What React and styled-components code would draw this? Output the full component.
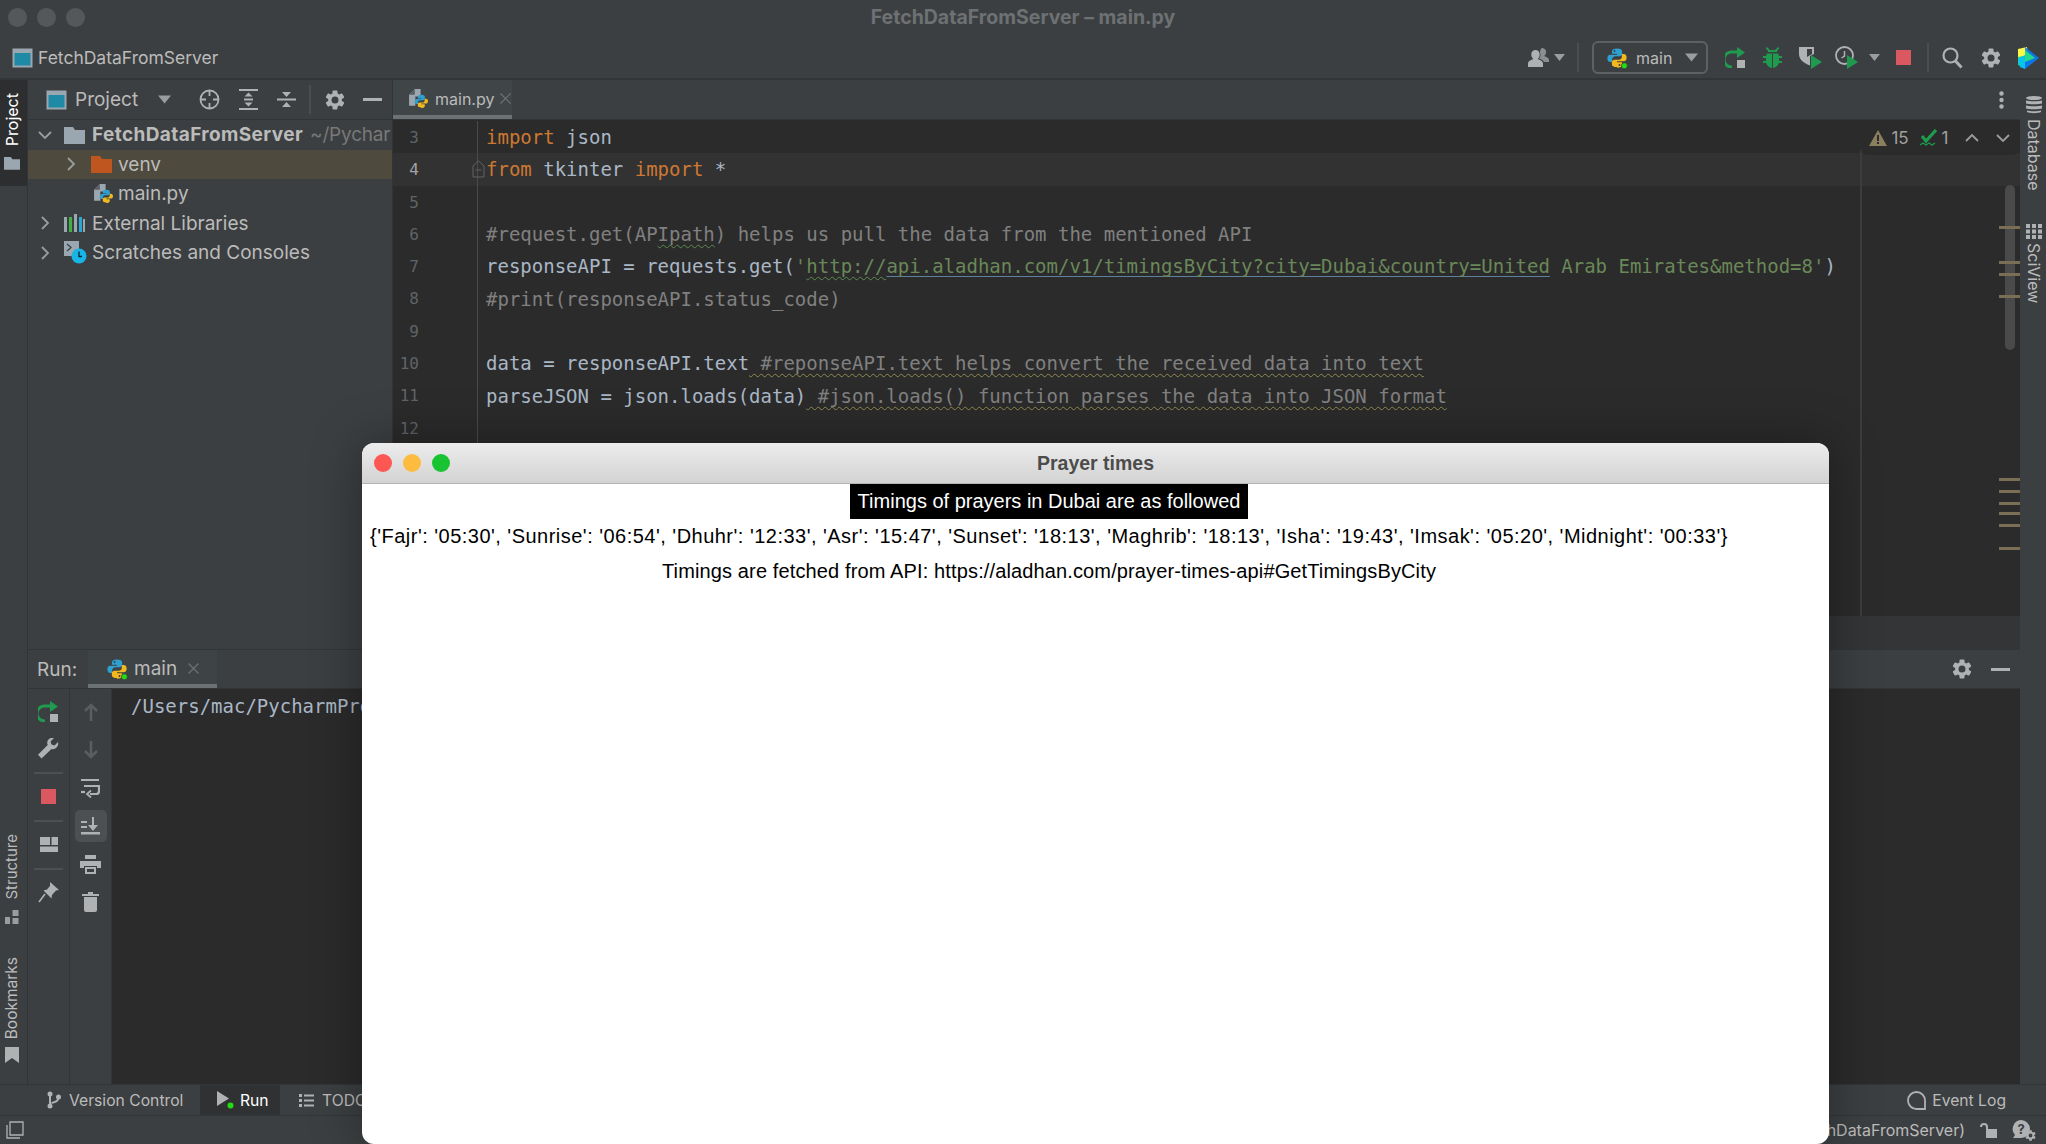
import React from "react";
import styled, { createGlobalStyle } from "styled-components";

const Global = createGlobalStyle`
  html, body { margin: 0; padding: 0; background: #3c3f41; }
  * { box-sizing: border-box; }
  svg { flex: none; }
`;

const UI = `Inter, "Liberation Sans", sans-serif`;
const MONO = `"DejaVu Sans Mono", "Liberation Mono", monospace`;

const Screen = styled.div`
  position: relative; width: 2046px; height: 1144px; overflow: hidden;
  display: flex; flex-direction: column; background: #3c3f41;
  font-family: ${UI}; color: #bbbbbb;
`;
const TitleBar = styled.div`
  height: 37px; flex: none; display: flex; align-items: center; position: relative; padding: 0 0 3px 8px; gap: 10px;
`;
const GreyDot = styled.span`width: 19px; height: 19px; border-radius: 50%; background: #55585a;`;
const TitleText = styled.div`
  position: absolute; left: 0; right: 0; top: 5px; text-align: center; font-size: 19.5px; line-height: 24px; font-weight: 700; color: #6e7173;
`;
const NavBar = styled.div`
  height: 43px; flex: none; display: flex; align-items: center; padding: 0 7px 0 12px; border-bottom: 2px solid #323537;
`;
const NavName = styled.span`font-size: 17.5px; margin-left: 5px; color: #bbbbbb;`;
const NavTools = styled.div`margin-left: auto; display: flex; align-items: center;`;
const Slot = styled.span`
  display: flex; align-items: center; justify-content: center; flex: none;
  width: ${p => p.$w}px; margin-left: ${p => p.$ml || 0}px;
`;
const Sep = styled.span`width: 2px; height: 29px; background: #4b4e50; margin-left: ${p => p.$ml}px; flex: none;`;
const ConfigButton = styled.div`
  width: 116px; height: 33px; margin-left: 13px; border: 2px solid #5e6163; border-radius: 6px; flex: none;
  display: flex; align-items: center; padding-left: 12px; gap: 8px; font-size: 16px; color: #bbbbbb;
`;
const Body = styled.div`flex: 1; min-height: 0; display: flex;`;
const LeftStripe = styled.div`
  width: 28px; flex: none; border-right: 1px solid #323537; display: flex; flex-direction: column;
`;
const StripeTab = styled.div`
  display: flex; flex-direction: column; align-items: center; gap: ${p => p.$gap || 8}px; width: 27px;
  padding: ${p => p.$pad}; background: ${p => p.$active ? "#2c2e2f" : "transparent"};
  margin-top: ${p => p.$top || 0}px;
`;
const VerticalUp = styled.span`
  writing-mode: vertical-rl; transform: rotate(180deg); font-size: ${p => p.$size || 16}px; line-height: 20px;
  color: ${p => p.$active ? "#ffffff" : "#bbbbbb"};
`;
const VerticalDown = styled.span`writing-mode: vertical-rl; font-size: 16px; line-height: 20px; color: #bbbbbb;`;
const RightStripe = styled.div`
  width: 26px; flex: none; display: flex; flex-direction: column; align-items: center; padding: 16px 0 0 2px; background: #3c3f41;
`;
const RightTab = styled.div`display: flex; flex-direction: column; align-items: center; gap: ${p => p.$gap || 5}px; margin-bottom: ${p => p.$mb || 0}px;`;
const Center = styled.div`flex: 1; min-width: 0; display: flex; flex-direction: column;`;
const Upper = styled.div`height: 569px; flex: none; display: flex;`;
const ProjectPanel = styled.div`width: 365px; flex: none; display: flex; flex-direction: column; border-right: 1px solid #323537;`;
const PanelHead = styled.div`
  height: 40px; flex: none; display: flex; align-items: center; padding-left: 18px; border-bottom: 1px solid #323537;
`;
const PanelTitle = styled.span`font-size: 19px; margin-left: 8px; width: 64px; color: #bbbbbb;`;
const Tree = styled.div`display: flex; flex-direction: column;`;
const Row = styled.div`
  height: 29.5px; display: flex; align-items: center; font-size: 19px; white-space: nowrap; overflow: hidden;
  padding-left: ${p => p.$indent}px; background: ${p => p.$selected ? "#4f4a3e" : "transparent"};
`;
const Chevron = styled.span`width: ${p => p.$w}px; flex: none; display: flex; align-items: center;`;
const RowLabel = styled.span`
  margin-left: ${p => p.$ml ?? 7}px; font-weight: ${p => p.$bold ? 700 : 400}; color: #bbbbbb; letter-spacing: ${p => p.$bold ? "0.4px" : "0"};
`;
const RowHint = styled.span`margin-left: 7px; color: #787878; letter-spacing: -0.2px;`;
const EditorPane = styled.div`flex: 1; min-width: 0; display: flex; flex-direction: column;`;
const TabBar = styled.div`height: 40px; flex: none; display: flex; align-items: stretch; justify-content: space-between; border-bottom: 1px solid #323537;`;
const FileTab = styled.div`
  width: 119px; display: flex; align-items: center; padding: 2px 0 0 15px; gap: 6px; font-size: 16px; color: #bbbbbb;
  background: #404548; border-bottom: 4px solid #6c7174;
`;
const Kebab = styled.div`width: 66px; padding-right: 16px; display: flex; align-items: center; justify-content: flex-end;`;
const EditorBody = styled.div`position: relative; flex: 1; min-height: 0; background: #2b2b2b; overflow: hidden; padding-top: 1px;`;
const CodeLine = styled.div`
  position: relative; height: 32.3px; display: flex; align-items: center;
  background: ${p => p.$current ? "#323232" : "transparent"};
  font-family: ${MONO}; font-size: 19px; white-space: pre; color: #a9b7c6;
`;
const LineNo = styled.span`
  width: 85px; flex: none; padding-right: 58px; text-align: right; font-size: 16px;
  color: ${p => p.$current ? "#a4a3a3" : "#606366"}; border-right: 1px solid #4a4a4a; align-self: stretch; line-height: 34px;
`;
const Code = styled.span`padding-left: 8px;`;
const Keyword = styled.span`color: #cc7832;`;
const Comment = styled.span`color: #808080;`;
const Str = styled.span`color: #6a8759;`;
const Wavy = styled.span`
  text-decoration: underline wavy ${p => p.$c || "#8f8b4e"} 1px; text-decoration-skip-ink: none; text-underline-offset: 3px;
`;
const Link = styled.span`text-decoration: underline solid #5f7f9e 1px; text-decoration-skip-ink: none; text-underline-offset: 3px;`;
const FoldMark = styled.svg`position: absolute; left: 79px; top: 7px;`;
const MarginLine = styled.div`position: absolute; left: 1467px; top: 0; bottom: 0; width: 2px; background: #3c3c3c;`;
const Inspection = styled.div`
  position: absolute; left: 1467px; top: 0; width: 160px; height: 35px; background: #2b2b2b; border-radius: 0 0 8px 8px;
  display: flex; align-items: center; padding-left: 9px; font-size: 17px; color: #a0a0a0;
`;
const Scroll = styled.div`position: absolute; left: 1612px; top: 65px; width: 10px; height: 165px; border-radius: 5px; background: #4a4a4a;`;
const Mark = styled.div`position: absolute; left: 1606px; width: 21px; height: 3px; background: #7a6f55; top: ${p => p.$y}px;`;
const CrumbBar = styled.div`height: 33px; flex: none; background: #333536;`;
const RunPanel = styled.div`flex: 1; min-height: 0; display: flex; flex-direction: column; border-top: 1px solid #323537;`;
const RunHead = styled.div`height: 39px; flex: none; display: flex; align-items: stretch; border-bottom: 1px solid #323537; padding-left: 9px;`;
const RunLabel = styled.span`width: 51px; font-size: 19px; align-self: center; color: #bbbbbb;`;
const RunTab = styled.div`
  width: 129px; display: flex; align-items: center; padding: 3px 0 0 18px; gap: 6px; font-size: 19px; color: #bbbbbb;
  border-bottom: 4px solid #6c7174; background: #3e4346;
`;
const RunTools = styled.div`margin-left: auto; display: flex; align-items: center; gap: 19px; padding-right: 10px;`;
const RunBody = styled.div`flex: 1; min-height: 0; display: flex;`;
const ToolCol = styled.div`
  width: ${p => p.$w}px; flex: none; display: flex; flex-direction: column; align-items: center; border-right: 1px solid #323537; padding-top: 4px;
`;
const ToolBtn = styled.div`
  width: 32px; height: ${p => p.$h || 38}px; display: flex; align-items: center; justify-content: center; border-radius: 5px; flex: none;
  background: ${p => p.$on ? "#4c5052" : "transparent"}; margin: ${p => p.$on ? "3px 0" : "0"};
`;
const ToolDiv = styled.div`width: 29px; height: 2px; background: #4d5052; margin: 4.5px 0; flex: none;`;
const Console = styled.div`
  flex: 1; background: #2b2b2b; font-family: ${MONO}; font-size: 19px; color: #a9b7c6; padding: 6px 19px; white-space: pre;
`;
const ToolTabs = styled.div`
  height: 31px; flex: none; display: flex; align-items: stretch; font-size: 15.7px; border-top: 1px solid #323537; padding-left: 47px; position: relative;
`;
const BottomTab = styled.div`
  display: flex; align-items: center; gap: ${p => p.$gap || 8}px; width: ${p => p.$w}px; padding-left: ${p => p.$pl || 0}px;
  background: ${p => p.$active ? "#2f3132" : "transparent"}; color: ${p => p.$active ? "#ffffff" : "#bbbbbb"};
`;
const EventLog = styled.div`margin-left: auto; margin-right: 40px; display: flex; align-items: center; gap: 6px; color: #bbbbbb;`;
const StatusBar = styled.div`
  height: 29px; flex: none; display: flex; align-items: center; padding: 0 10px 0 6px; border-top: 1px solid #323537; font-size: 16px;
`;
const StatusRight = styled.div`margin-left: auto; display: flex; align-items: center; gap: 15px; color: #bbbbbb;`;

const PrayerWindow = styled.div`
  position: absolute; left: 362px; top: 443px; width: 1467px; height: 701px; background: #ffffff;
  border-radius: 12px; overflow: hidden; box-shadow: 0 0 50px rgba(0,0,0,0.35);
  display: flex; flex-direction: column; font-family: "Liberation Sans", Arial, sans-serif; color: #000;
`;
const WinTitle = styled.div`
  height: 41px; flex: none; position: relative; display: flex; align-items: center; padding-left: 6px; gap: 11px;
  background: linear-gradient(#ececec, #d3d3d3); border-bottom: 1px solid #b4b4b4;
`;
const Light = styled.span`width: 18px; height: 18px; border-radius: 50%; background: ${p => p.$c}; margin-left: ${p => p.$ml || 0}px;`;
const WinName = styled.span`position: absolute; left: 0; right: 0; text-align: center; font-size: 19.5px; font-weight: 700; color: #4c4c4c;`;
const WinContent = styled.div`width: 1374px; display: flex; flex-direction: column; align-items: center;`;
const BlackLabel = styled.div`height: 35px; background: #000; color: #fff; display: flex; align-items: center; padding: 0 8px; font-size: 20px;`;
const PlainLabel = styled.div`height: 35px; display: flex; align-items: center; font-size: 20px; white-space: pre; letter-spacing: ${p => p.$track}px;`;

const Snake = () => (
  <>
    <path fill="#2f9fd0" d="M12 1.500c-3.600 0-5.500 1.100-5.500 3.200V7.400H12v1H4.600C2.600 8.400 1.500 10 1.500 12.200c0 2.400 1.100 4.100 3.100 4.100h2.100v-2.800c0-1.900 1.600-3.400 3.400-3.400h4.800c1.500 0 2.700-1.200 2.700-2.700V4.700c0-1.900-1.900-3.200-5.600-3.200z" />
    <path fill="#f2b91f" d="M12 22.500c3.600 0 5.500-1.100 5.500-3.200V16.600H12v-1h7.400c2 0 3.100-1.600 3.100-3.800 0-2.400-1.100-4.100-3.100-4.100h-2.100v2.800c0 1.900-1.600 3.400-3.400 3.400h-4.800c-1.500 0-2.700 1.200-2.700 2.700v2.100c0 1.900 1.900 3.200 5.600 3.200z" />
  </>
);
const Py = ({ size = 24, dot }) => (
  <svg width={size} height={size} viewBox="0 0 24 24">
    <Snake />
    <circle cx="9.300" cy="4.400" r="1" fill="#3c3f41" />
    <circle cx="14.700" cy="19.600" r="1" fill="#3c3f41" />
    {dot && <circle cx="20" cy="20.500" r="3.300" fill="#22dd11" stroke="#3c3f41" strokeWidth="0.800" />}
  </svg>
);
const PyFile = ({ size = 21 }) => (
  <svg width={size} height={size} viewBox="0 0 20 20">
    <path fill="#9aa7b0" d="M1 6.500L6.500 1H12v7H7v9H1z" />
    <path fill="#5a5f62" d="M6.500 1v5.500H1z" />
    <g transform="translate(5.500 5.500) scale(.6)"><Snake /></g>
  </svg>
);
const ModuleIcon = () => (
  <svg width="21" height="20" viewBox="0 0 21 20">
    <rect x="0.500" y="0.500" width="20" height="19" fill="#9aa7b0" />
    <rect x="2.500" y="5" width="16" height="12.500" fill="#1f8aa6" />
  </svg>
);
const Folder = ({ c = "#9aa7b0", w = 21 }) => (
  <svg width={w} height="18" viewBox="0 0 21 18"><path fill={c} d="M0 1h9l2 3h10v14H0z" /></svg>
);
const Caret = ({ w = 13, c = "#9a9da0" }) => (
  <svg width={w} height="9" viewBox="0 0 13 9"><path fill={c} d="M0 0.500h13L6.500 8.500z" /></svg>
);
const Chev = ({ dir = "right", size = 14, c = "#9a9da0" }) => {
  const d = { right: "M4 1l6 6-6 6", down: "M1 4l6 6 6-6", up: "M1 10l6-6 6 6" }[dir];
  return <svg width={size} height={size} viewBox="0 0 14 14"><path d={d} fill="none" stroke={c} strokeWidth="1.800" /></svg>;
};
const Gear = ({ size = 20, c = "#afb1b3" }) => (
  <svg width={size} height={size} viewBox="0 0 20 20">
    <g fill={c}>
      {[0, 60, 120, 180, 240, 300].map(a => <rect key={a} x="7.500" y="0.500" width="5" height="5" rx="1" transform={`rotate(${a} 10 10)`} />)}
    </g>
    <circle cx="10" cy="10" r="5.200" fill="none" stroke={c} strokeWidth="3.400" />
  </svg>
);
const Target = () => (
  <svg width="21" height="21" viewBox="0 0 21 21" fill="none" stroke="#afb1b3" strokeWidth="1.800">
    <circle cx="10.500" cy="10.500" r="9" />
    <path d="M10.500 1v6M10.500 14v6M1 10.500h6M14 10.500h6" />
  </svg>
);
const ExpandAll = () => (
  <svg width="19" height="21" viewBox="0 0 19 21" fill="#afb1b3">
    <rect y="0" width="19" height="2" /><rect y="19" width="19" height="2" /><rect y="9.500" width="9" height="2" x="5" />
    <path d="M9.500 3.500l4 4h-8zM9.500 17.500l-4-4h8z" />
  </svg>
);
const CollapseAll = () => (
  <svg width="19" height="21" viewBox="0 0 19 21" fill="#afb1b3">
    <rect y="9.500" width="19" height="2" />
    <path d="M9.500 8l-4.500-5h9zM9.500 13l4.500 5H5z" />
  </svg>
);
const Minus = ({ w = 19 }) => <svg width={w} height="3" viewBox="0 0 19 3"><rect width="19" height="3" fill="#afb1b3" /></svg>;
const Close = ({ size = 11, c = "#6e7173" }) => (
  <svg width={size} height={size} viewBox="0 0 11 11"><path d="M0.500 0.500l10 10M10.500 0.500l-10 10" stroke={c} strokeWidth="1.200" /></svg>
);
const ExtLib = () => (
  <svg width="21" height="18" viewBox="0 0 21 18">
    <rect x="0" y="3" width="3" height="15" fill="#9aa7b0" />
    <rect x="5" y="3" width="3" height="15" fill="#3fb33f" />
    <rect x="10" y="0" width="3" height="18" fill="#9aa7b0" />
    <rect x="15" y="3" width="3" height="15" fill="#2aa7d4" />
    <rect x="19" y="5" width="2" height="13" fill="#9aa7b0" />
  </svg>
);
const Scratches = () => (
  <svg width="23" height="23" viewBox="0 0 23 23">
    <path fill="#9aa7b0" d="M0 0h15v8a8 8 0 0 0-7 7H0z" />
    <path d="M3 3l4 3.500-4 3.500" fill="none" stroke="#3c3f41" strokeWidth="1.300" />
    <circle cx="15" cy="15" r="7.500" fill="#16b5e6" />
    <path d="M15 10.500V15.500h3" fill="none" stroke="#123" strokeWidth="1.300" />
  </svg>
);
const Rerun = ({ size = 21 }) => (
  <svg width={size} height={size} viewBox="0 0 21 21">
    <path d="M7 20a7.500 7.500 0 0 1-1-15h7" fill="none" stroke="#1f9a4f" strokeWidth="3" />
    <path d="M12 0l8 5.500-8 5.500z" fill="#1f9a4f" />
    <rect x="12" y="13" width="8" height="8" fill="#afb1b3" />
  </svg>
);
const Bug = () => (
  <svg width="19" height="21" viewBox="0 0 19 21" fill="#1f9a4f">
    <path d="M4 0l3 3h5l3-3 1.300 1.300L14 4v1H5V4L2.700 1.300z" />
    <path d="M4 6.500h11a6 6 0 0 1 1 3v5a6.500 6.500 0 0 1-13 0v-5a6 6 0 0 1 1-3z" />
    <path d="M0 9h19v2H0zM0 14h19v2H0z" />
    <path d="M9 7h1v14H9z" fill="#3c3f41" />
  </svg>
);
const Coverage = () => (
  <svg width="23" height="23" viewBox="0 0 23 23">
    <path fill="#afb1b3" d="M0 1h15v7l-4 2v9.500C4 17 0 13 0 8z" />
    <path fill="#3c3f41" d="M8 3h5v5l-5 3z" />
    <path fill="#1f9a4f" d="M12 9l11 7-11 7z" />
  </svg>
);
const Profile = () => (
  <svg width="23" height="23" viewBox="0 0 23 23">
    <circle cx="9.500" cy="9.500" r="8.500" fill="none" stroke="#afb1b3" strokeWidth="1.800" />
    <path d="M9.500 5v5l-3 2" fill="none" stroke="#afb1b3" strokeWidth="1.500" />
    <path fill="#1f9a4f" d="M12 9l11 7-11 7z" />
  </svg>
);
const Stop = ({ size = 15 }) => <svg width={size} height={size}><rect width={size} height={size} fill="#db5860" /></svg>;
const Search = () => (
  <svg width="21" height="22" viewBox="0 0 21 22" fill="none" stroke="#afb1b3">
    <circle cx="8.500" cy="8.500" r="7" strokeWidth="2.200" /><path d="M13.500 14l6 6.500" strokeWidth="3" />
  </svg>
);
const Logo = () => (
  <svg width="21" height="22" viewBox="0 0 21 22">
    <path fill="#21d789" d="M0 2l7 0 0 18-7-2z" />
    <path fill="#fcf84a" d="M0 2l9-2 1 8-10 2z" />
    <path fill="#07c3f2" d="M0 12l7-4 0 14-5-2z" />
    <path fill="#087cfa" d="M7 0l14 11-14 11z" opacity="0.900" />
    <path fill="#21d789" d="M7 3l10 8-10 4z" />
  </svg>
);
const User = () => (
  <svg width="21" height="19" viewBox="0 0 21 19" fill="#afb1b3">
    <path d="M14 0a4 4 0 0 1 4 5c-.3 1.500-1 2.500-2 3 2 1 5 1.500 5 4v2h-5c-1-2-3-3-5-3.500 1.500-1.500 2-3.500 1-6 0-2 1-4.500 2-4.500z" opacity="0.700" />
    <path d="M7.500 2a4.200 4.200 0 0 1 4.200 4.500c0 2-1 3.500-2 4.500 2.500 1 5.300 2 5.300 4.500V19H0v-3.500C0 13 3 12 5.300 11c-1-1-2-2.500-2-4.500A4.200 4.200 0 0 1 7.500 2z" />
  </svg>
);
const Warn = () => (
  <svg width="18" height="16" viewBox="0 0 18 16"><path fill="#8b7f5e" d="M9 0l9 16H0z" /><rect x="8" y="5" width="2" height="6" fill="#2b2b2b" /><rect x="8" y="12" width="2" height="2" fill="#2b2b2b" /></svg>
);
const Check = () => (
  <svg width="18" height="18" viewBox="0 0 18 18" fill="none" stroke="#1f9a4f">
    <path d="M2 7l4 5 10-11" strokeWidth="3.200" /><path d="M0 16l3-2 3 2 3-2 3 2 3-2" strokeWidth="1.300" />
  </svg>
);
const Dots = () => (
  <svg width="5" height="18" viewBox="0 0 5 18" fill="#afb1b3"><circle cx="2.500" cy="2.500" r="2.200" /><circle cx="2.500" cy="9" r="2.200" /><circle cx="2.500" cy="15.500" r="2.200" /></svg>
);
const Db = () => (
  <svg width="16" height="18" viewBox="0 0 16 18" fill="#afb1b3"><ellipse cx="8" cy="2" rx="8" ry="2" /><path d="M0 4.500c2 1 14 1 16 0v3c-2 1-14 1-16 0zM0 9.500c2 1 14 1 16 0v3c-2 1-14 1-16 0zM1 14.500c3 1 11 1 14 0v1.500c-2 1.500-12 1.500-14 0z" /></svg>
);
const Grid4 = () => (
  <svg width="16" height="15" viewBox="0 0 16 15" fill="#afb1b3">
    {[0, 5.500, 11].flatMap(y => [0, 6, 12].map(x => <rect key={`${x}-${y}`} x={x} y={y} width="4" height="4" />))}
  </svg>
);
const Tree2 = () => (
  <svg width="14" height="14" viewBox="0 0 14 14" fill="#9a9da0"><rect x="7.500" y="0" width="6" height="6" /><rect x="0" y="7" width="5" height="7" /><rect x="7.500" y="8" width="6" height="6" /></svg>
);
const Bookmark = () => <svg width="14" height="16" viewBox="0 0 14 16"><path fill="#afb1b3" d="M0 0h14v16l-7-5-7 5z" /></svg>;
const Wrench = () => (
  <svg width="21" height="21" viewBox="0 0 21 21"><path fill="#afb1b3" d="M20 4l-3.500 3.500-3-1L12.500 3.500 16 0c-3-.8-6.500 1-6.800 4.500 0 1 .1 1.800.5 2.500L0 16.800 3.500 20.500l10-9.500c3.500 1 7.700-2.500 6.500-7z" /></svg>
);
const Arrow = ({ up }) => (
  <svg width="14" height="18" viewBox="0 0 14 18" style={up ? undefined : { transform: "scaleY(-1)" }}><path d="M7 18V2M1 8l6-6 6 6" fill="none" stroke="#5b5e60" strokeWidth="2.500" /></svg>
);
const SoftWrap = () => (
  <svg width="19" height="20" viewBox="0 0 19 20" fill="none" stroke="#afb1b3" strokeWidth="2.200">
    <path d="M0 2h18M3 8h15v5a3 3 0 0 1-3 3H9" /><path d="M0 14h4" /><path d="M10 12.500l-4 3.500 4 3.500" strokeWidth="1.800" />
  </svg>
);
const ScrollEnd = () => (
  <svg width="19" height="18" viewBox="0 0 19 18" fill="#afb1b3">
    <rect y="4" width="6" height="2" /><rect y="9" width="6" height="2" /><rect y="15" width="19" height="2.500" />
    <path d="M13 0v8h4l-5 6-5-6h4V0z" />
  </svg>
);
const Layout = () => (
  <svg width="18" height="15" viewBox="0 0 18 15" fill="#afb1b3"><rect width="10" height="8" /><rect x="11.500" width="6.500" height="8" /><rect y="9.500" width="18" height="5.500" /></svg>
);
const Pin = () => (
  <svg width="21" height="21" viewBox="0 0 21 21" fill="#afb1b3"><path d="M12 0l9 8-3 .5-4 4.500-.5 3.500-8-8 3.500-1 3-3.500z" /><path d="M7 12l-6 8" stroke="#afb1b3" strokeWidth="1.500" /></svg>
);
const Printer = () => (
  <svg width="21" height="19" viewBox="0 0 21 19" fill="#afb1b3"><rect x="5" width="11" height="4" /><path d="M0 6h21v7h-4v-2H4v2H0z" /><path d="M5 12h11v7H5zm2 2v3h7v-3z" fillRule="evenodd" /></svg>
);
const Trash = () => (
  <svg width="17" height="20" viewBox="0 0 17 20" fill="#afb1b3"><rect y="2" width="17" height="2" /><rect x="6" width="5" height="2" /><path d="M2 5h13v13a2 2 0 0 1-2 2H4a2 2 0 0 1-2-2z" /></svg>
);
const Branch = () => (
  <svg width="14" height="18" viewBox="0 0 14 18" fill="#afb1b3"><circle cx="3" cy="3" r="2.500" /><circle cx="3" cy="15" r="2.500" /><circle cx="11.500" cy="6" r="2.500" /><path d="M2 3h2v12H2z" /><path d="M10.500 6h2c0 4-3 6-8 7v-2c4-1 6-2 6-5z" /></svg>
);
const RunPlay = () => (
  <svg width="17" height="18" viewBox="0 0 17 18"><path fill="#afb1b3" d="M0 0l12 7.500L0 15z" /><circle cx="13.500" cy="14.500" r="3" fill="#22dd11" /></svg>
);
const ListIcon = () => (
  <svg width="15" height="13" viewBox="0 0 15 13" fill="#afb1b3"><rect width="3" height="3" /><rect y="5" width="3" height="3" /><rect y="10" width="3" height="3" /><rect x="5" y="0.500" width="10" height="2" /><rect x="5" y="5.500" width="10" height="2" /><rect x="5" y="10.500" width="10" height="2" /></svg>
);
const Bubble = () => (
  <svg width="19" height="19" viewBox="0 0 19 19"><path d="M18 18H9.500A8.500 8.500 0 1 1 18 9.500z" fill="none" stroke="#afb1b3" strokeWidth="1.800" /></svg>
);
const SquareIcon = () => (
  <svg width="18" height="18" viewBox="0 0 18 18" fill="none" stroke="#afb1b3" strokeWidth="1.300"><path d="M4 1h13v13H4zM1 4v13h13" /></svg>
);
const Unlock = () => (
  <svg width="17" height="16" viewBox="0 0 17 16" fill="#afb1b3"><rect x="6" y="7" width="11" height="9" /><path d="M0 5a4 4 0 0 1 8 0v3H6V5a2 2 0 0 0-4 0z" /></svg>
);
const HelpGear = () => (
  <svg width="24" height="21" viewBox="0 0 24 21">
    <path fill="#afb1b3" d="M9 0a9 9 0 0 1 9 9c0 5-4 9-9 9H1l2-3A9 9 0 0 1 9 0z" />
    <text x="5.500" y="14" fontSize="13" fontWeight="700" fill="#3c3f41" fontFamily="Inter, sans-serif">?</text>
    <g transform="translate(13 10)"><Gear size={11} /></g>
  </svg>
);

const lines = [
  { n: 3, c: <><Keyword>import</Keyword> json</> },
  { n: 4, cur: true, c: <><Keyword>from</Keyword> tkinter <Keyword>import</Keyword> *</> },
  { n: 5, c: null },
  { n: 6, c: <Comment>#request.get(AP<Wavy $c="#5f8a4f">Ipath</Wavy>) helps us pull the data from the mentioned API</Comment> },
  { n: 7, c: <>responseAPI = requests.get(<Str>'<Wavy $c="#5f8a4f">http://</Wavy><Link>api.aladhan.com/v1/timingsByCity?city=Dubai&amp;country=United</Link> Arab Emirates&amp;method=8'</Str>)</> },
  { n: 8, c: <Comment>#print(responseAPI.status_code)</Comment> },
  { n: 9, c: null },
  { n: 10, c: <>data = responseAPI.text<Comment><Wavy> #reponseAPI.text helps convert the received data into text</Wavy></Comment></> },
  { n: 11, c: <>parseJSON = json.loads(data)<Comment><Wavy> #json.loads() function parses the data into JSON format</Wavy></Comment></> },
  { n: 12, c: null },
];

const timings = "{'Fajr': '05:30', 'Sunrise': '06:54', 'Dhuhr': '12:33', 'Asr': '15:47', 'Sunset': '18:13', 'Maghrib': '18:13', 'Isha': '19:43', 'Imsak': '05:20', 'Midnight': '00:33'}";

export default function App() {
  return (
    <Screen>
      <Global />
      <TitleBar>
        <GreyDot /><GreyDot /><GreyDot />
        <TitleText>FetchDataFromServer – main.py</TitleText>
      </TitleBar>
      <NavBar>
        <ModuleIcon />
        <NavName>FetchDataFromServer</NavName>
        <NavTools>
          <User />
          <Slot $w={12} $ml={4}><Caret w={11} /></Slot>
          <Sep $ml={12} />
          <ConfigButton><Py size={22} dot /><span>main</span><Slot $w={13} $ml={5}><Caret /></Slot></ConfigButton>
          <Slot $w={21} $ml={17}><Rerun /></Slot>
          <Slot $w={19} $ml={17}><Bug /></Slot>
          <Slot $w={23} $ml={17}><Coverage /></Slot>
          <Slot $w={23} $ml={13}><Profile /></Slot>
          <Slot $w={12} $ml={10}><Caret w={11} /></Slot>
          <Slot $w={15} $ml={16}><Stop /></Slot>
          <Sep $ml={16} />
          <Slot $w={21} $ml={13}><Search /></Slot>
          <Slot $w={20} $ml={18}><Gear /></Slot>
          <Slot $w={21} $ml={17}><Logo /></Slot>
        </NavTools>
      </NavBar>
      <Body>
        <LeftStripe>
          <StripeTab $active $pad="13px 3px 14px 0">
            <VerticalUp $active>Project</VerticalUp>
            <Folder w={16} />
          </StripeTab>
          <StripeTab $pad="0 3px 0 0" $top={648} $gap={10}>
            <VerticalUp $size={15}>Structure</VerticalUp>
            <Tree2 />
          </StripeTab>
          <StripeTab $pad="0 3px 0 0" $top={33}>
            <VerticalUp $size={15.500}>Bookmarks</VerticalUp>
            <Bookmark />
          </StripeTab>
        </LeftStripe>
        <Center>
          <Upper>
            <ProjectPanel>
              <PanelHead>
                <ModuleIcon />
                <PanelTitle>Project</PanelTitle>
                <Slot $w={13} $ml={19}><Caret /></Slot>
                <Slot $w={21} $ml={28}><Target /></Slot>
                <Slot $w={19} $ml={19}><ExpandAll /></Slot>
                <Slot $w={19} $ml={19}><CollapseAll /></Slot>
                <Sep $ml={13} />
                <Slot $w={20} $ml={14}><Gear /></Slot>
                <Slot $w={19} $ml={18}><Minus /></Slot>
              </PanelHead>
              <Tree>
                <Row $indent={10}><Chevron $w={26}><Chev dir="down" /></Chevron><Folder /><RowLabel $bold>FetchDataFromServer</RowLabel><RowHint>~/Pychar</RowHint></Row>
                <Row $indent={36} $selected><Chevron $w={27}><Chev /></Chevron><Folder c="#c0561f" /><RowLabel $ml={6}>venv</RowLabel></Row>
                <Row $indent={65}><PyFile /><RowLabel $ml={4}>main.py</RowLabel></Row>
                <Row $indent={10}><Chevron $w={26}><Chev /></Chevron><ExtLib /><RowLabel>External Libraries</RowLabel></Row>
                <Row $indent={10}><Chevron $w={26}><Chev /></Chevron><Scratches /><RowLabel $ml={5}>Scratches and Consoles</RowLabel></Row>
              </Tree>
            </ProjectPanel>
            <EditorPane>
              <TabBar>
                <FileTab><PyFile /><span>main.py</span><Close /></FileTab>
                <Kebab><Dots /></Kebab>
              </TabBar>
              <EditorBody>
                {lines.map(l => (
                  <CodeLine key={l.n} $current={l.cur}>
                    <LineNo $current={l.cur}>{l.n}</LineNo>
                    {l.cur && (
                      <FoldMark width="13" height="18" viewBox="0 0 13 18" fill="none" stroke="#606366">
                        <path d="M1 6l5.500-5 5.500 5v11H1z" /><path d="M3.500 10h6" />
                      </FoldMark>
                    )}
                    <Code>{l.c}</Code>
                  </CodeLine>
                ))}
                <MarginLine />
                <Inspection>
                  <Warn /><Slot $w={22} $ml={2}>15</Slot>
                  <Slot $w={18} $ml={9}><Check /></Slot><Slot $w={12} $ml={1}>1</Slot>
                  <Slot $w={14} $ml={14}><Chev dir="up" /></Slot>
                  <Slot $w={14} $ml={17}><Chev dir="down" /></Slot>
                </Inspection>
                <Scroll />
                {[106, 141, 153, 175, 358, 370, 382, 392, 404, 427].map(y => <Mark key={y} $y={y} />)}
              </EditorBody>
              <CrumbBar />
            </EditorPane>
          </Upper>
          <RunPanel>
            <RunHead>
              <RunLabel>Run:</RunLabel>
              <RunTab><Py size={22} dot /><span>main</span><Slot $w={11} $ml={5}><Close /></Slot></RunTab>
              <RunTools><Gear /><Minus /></RunTools>
            </RunHead>
            <RunBody>
              <ToolCol $w={42}>
                <ToolBtn $h={37}><Rerun /></ToolBtn>
                <ToolBtn $h={37}><Wrench /></ToolBtn>
                <ToolDiv />
                <ToolBtn $h={37}><Stop /></ToolBtn>
                <ToolDiv />
                <ToolBtn $h={37}><Layout /></ToolBtn>
                <ToolDiv />
                <ToolBtn $h={37}><Pin /></ToolBtn>
              </ToolCol>
              <ToolCol $w={42}>
                <ToolBtn><Arrow up /></ToolBtn>
                <ToolBtn><Arrow /></ToolBtn>
                <ToolBtn><SoftWrap /></ToolBtn>
                <ToolBtn $on $h={32}><ScrollEnd /></ToolBtn>
                <ToolBtn><Printer /></ToolBtn>
                <ToolBtn><Trash /></ToolBtn>
              </ToolCol>
              <Console>/Users/mac/PycharmProjects</Console>
            </RunBody>
          </RunPanel>
        </Center>
        <RightStripe>
          <RightTab $mb={33}><Db /><VerticalDown>Database</VerticalDown></RightTab>
          <RightTab $gap={4}><Grid4 /><VerticalDown>SciView</VerticalDown></RightTab>
        </RightStripe>
      </Body>
      <ToolTabs>
        <BottomTab $w={153}><Branch /><span>Version Control</span></BottomTab>
        <BottomTab $w={80} $pl={17} $gap={6} $active><RunPlay /><span>Run</span></BottomTab>
        <BottomTab $w={120} $pl={19}><ListIcon /><span>TODO</span></BottomTab>
        <EventLog><Bubble /><span>Event Log</span></EventLog>
      </ToolTabs>
      <StatusBar>
        <SquareIcon />
        <StatusRight>
          <span>Python 3.9 (FetchDataFromServer)</span>
          <Unlock />
          <HelpGear />
        </StatusRight>
      </StatusBar>
      <PrayerWindow>
        <WinTitle>
          <Light $c="#fc5753" $ml={6} /><Light $c="#fdbc40" /><Light $c="#19c332" />
          <WinName>Prayer times</WinName>
        </WinTitle>
        <WinContent>
          <BlackLabel>Timings of prayers in Dubai are as followed</BlackLabel>
          <PlainLabel $track={0.48}>{timings}</PlainLabel>
          <PlainLabel $track={0.13}>Timings are fetched from API: https://aladhan.com/prayer-times-api#GetTimingsByCity</PlainLabel>
        </WinContent>
      </PrayerWindow>
    </Screen>
  );
}
